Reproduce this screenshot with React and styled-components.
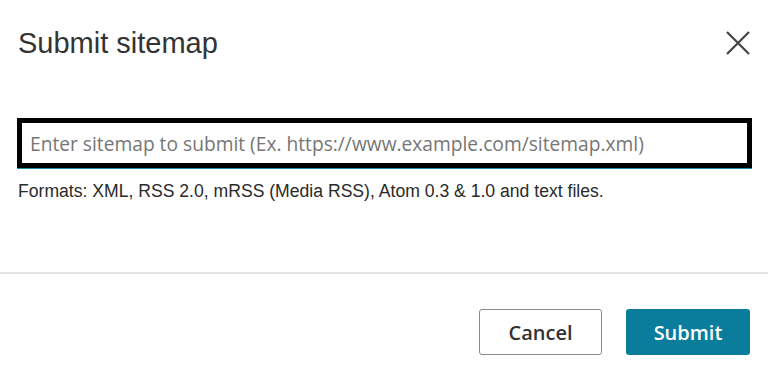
import React from "react";
import styled, { createGlobalStyle } from "styled-components";

const Global = createGlobalStyle`
  html, body { margin: 0; padding: 0; background: #fff; }
  * { box-sizing: border-box; }
`;

const Dialog = styled.div`
  width: 768px;
  height: 376px;
  background: #fff;
  display: flex;
  flex-direction: column;
  font-family: "Liberation Sans", Arial, sans-serif;
`;

const Header = styled.div`
  display: flex;
  align-items: center;
  justify-content: space-between;
  padding: 22px 16px 0 18px;
  height: 64px;
`;

const Title = styled.h2`
  margin: 0;
  font-family: "Liberation Sans", Arial, sans-serif;
  font-weight: 400;
  font-size: 29px;
  color: #333;
  line-height: 34px;
`;

const CloseButton = styled.button`
  border: none;
  background: transparent;
  padding: 0;
  width: 28px;
  height: 28px;
  display: flex;
  align-items: center;
  justify-content: center;
  cursor: pointer;
`;

const Body = styled.div`
  padding: 54px 17px 0 17px;
  height: 210px;
  border-bottom: 2px solid #e4e4e4;
`;

const Input = styled.input`
  display: block;
  width: 735px;
  height: 50px;
  border: 5px solid #000;
  box-shadow: 0 1px 0 #1c8fb3;
  padding: 0 8px;
  font-family: "Open Sans", sans-serif;
  font-size: 19.2px;
  color: #333;
  outline: none;
  &::placeholder { color: #767676; }
`;

const Hint = styled.p`
  margin: 13px 0 0 1px;
  font-family: "Liberation Sans", Arial, sans-serif;
  font-size: 17.6px;
  color: #2a2a2a;
`;

const Footer = styled.div`
  flex: 1;
  display: flex;
  justify-content: flex-end;
  align-items: flex-start;
  gap: 24px;
  padding: 35px 18px 0 0;
`;

const Button = styled.button`
  width: ${(p) => (p.$primary ? "124px" : "123px")};
  height: 46px;
  border-radius: 3px;
  border: ${(p) => (p.$primary ? "none" : "1.5px solid #8a8a8a")};
  background: ${(p) => (p.$primary ? "#0a7d9c" : "#fff")};
  color: ${(p) => (p.$primary ? "#fff" : "#333")};
  font-family: "Open Sans", sans-serif;
  font-weight: 600;
  font-size: 20px;
  cursor: pointer;
`;

export default function App() {
  return (
    <>
      <Global />
      <Dialog>
        <Header>
          <Title>Submit sitemap</Title>
          <CloseButton aria-label="Close">
            <svg width="26" height="26" viewBox="0 0 26 26">
              <path d="M2 2 L24 24 M24 2 L2 24" stroke="#444" strokeWidth="2.2" fill="none" />
            </svg>
          </CloseButton>
        </Header>
        <Body>
          <Input placeholder="Enter sitemap to submit (Ex. https://www.example.com/sitemap.xml)" />
          <Hint>Formats: XML, RSS 2.0, mRSS (Media RSS), Atom 0.3 &amp; 1.0 and text files.</Hint>
        </Body>
        <Footer>
          <Button>Cancel</Button>
          <Button $primary>Submit</Button>
        </Footer>
      </Dialog>
    </>
  );
}
